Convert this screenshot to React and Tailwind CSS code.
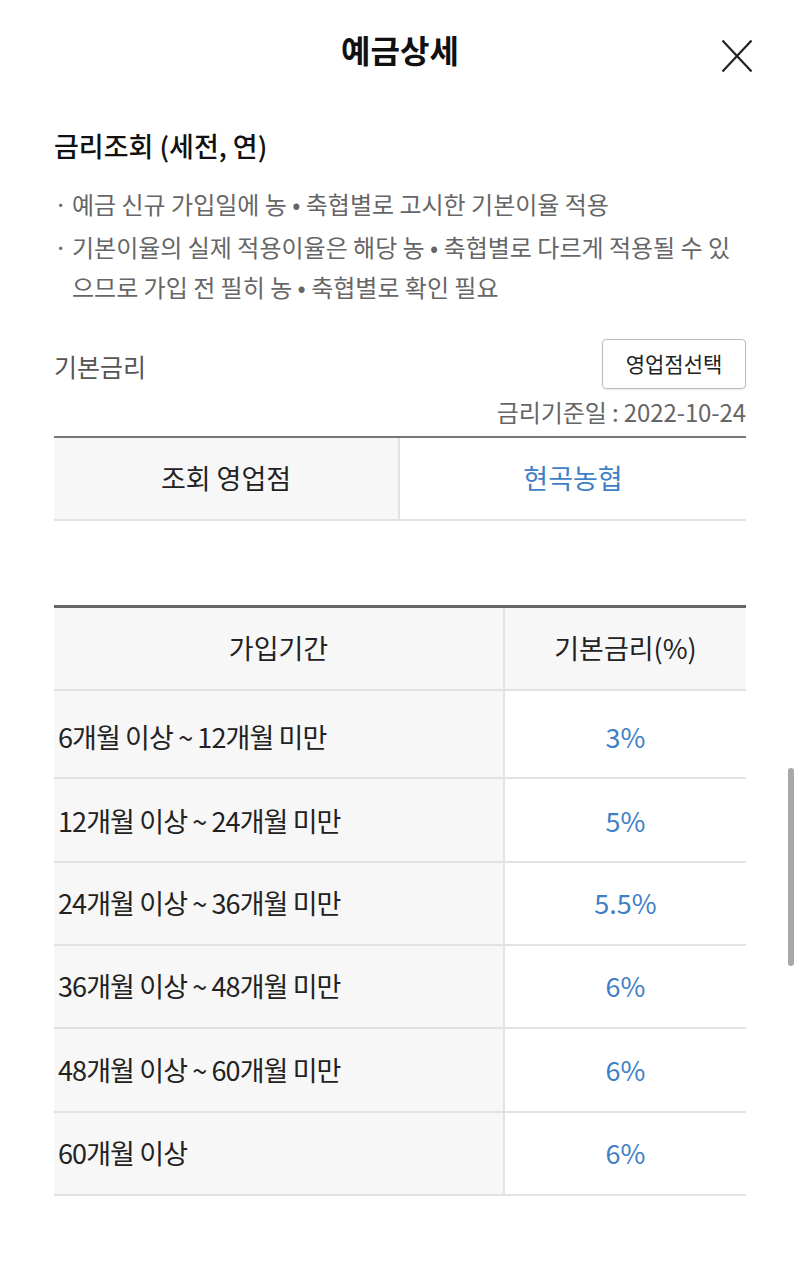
import React from "react";

const rows = [
  ["6개월 이상 ~ 12개월 미만", "3%", "h-[88px]", "translate-y-[3px]"],
  ["12개월 이상 ~ 24개월 미만", "5%", "h-[84px]", "translate-y-[1px]"],
  ["24개월 이상 ~ 36개월 미만", "5.5%", "h-[83px]", ""],
  ["36개월 이상 ~ 48개월 미만", "6%", "h-[83px]", ""],
  ["48개월 이상 ~ 60개월 미만", "6%", "h-[84px]", ""],
  ["60개월 이상", "6%", "h-[83px]", ""],
];

export default function App() {
  return (
    <div
      className="relative w-[800px] h-[1282px] bg-white overflow-hidden text-[#222]"
      style={{ fontFamily: '"Noto Sans CJK KR", "Noto Sans", sans-serif' }}
    >
      <header className="relative h-[100px] flex items-center justify-center">
        <h1 className="text-[32px] leading-[40px] font-bold text-[#111] -mt-[2px]">예금상세</h1>
        <button className="absolute right-[47px] top-[39px] w-[32px] h-[34px]" aria-label="close">
          <svg viewBox="0 0 32 34" className="w-[32px] h-[34px]" fill="none" stroke="#222" strokeWidth="2.2">
            <line x1="1.5" y1="1.5" x2="30.5" y2="32.5" />
            <line x1="30.5" y1="1.5" x2="1.5" y2="32.5" />
          </svg>
        </button>
      </header>

      <main className="px-[54px]">
        <h2 className="mt-[30px] text-[27px] font-medium leading-[36px] text-[#111] -translate-y-[2px]">
          금리조회 (세전, 연)
        </h2>

        <ul className="mt-[20px] text-[24px] leading-[40px] text-[#666]">
          <li className="relative pl-[18px] -translate-y-[2px]">
            <span className="absolute left-0 top-0">·</span>
            예금 신규 가입일에 농 • 축협별로 고시한 기본이율 적용
          </li>
          <li className="relative pl-[18px] mt-[3px] -translate-y-[2px]">
            <span className="absolute left-0 top-0">·</span>
            기본이율의 실제 적용이율은 해당 농 • 축협별로 다르게 적용될 수 있
            <br />
            으므로 가입 전 필히 농 • 축협별로 확인 필요
          </li>
        </ul>

        <div className="mt-[30px] flex items-center justify-between">
          <span className="text-[25px] leading-[34px] text-[#555] translate-y-[2px]">기본금리</span>
          <button className="w-[144px] h-[50px] border border-[#bbb] rounded-[4px] text-[21px] text-[#222] shadow-[0_1px_2px_rgba(0,0,0,0.08)]">
            영업점선택
          </button>
        </div>
        <div className="mt-[8px] text-right text-[24px] leading-[30px] text-[#666] tracking-[-0.1px]">
          금리기준일 : 2022-10-24
        </div>

        <div className="mt-[9px] border-t-2 border-[#777] border-b-2 border-b-[#e2e2e2] flex h-[85px]">
          <div className="w-[346px] bg-[#f7f7f7] border-r-2 border-[#e2e2e2] flex items-center justify-center text-[27px] text-[#222]">
            조회 영업점
          </div>
          <div className="flex-1 flex items-center justify-center text-[27px] text-[#3f7fc7]">
            현곡농협
          </div>
        </div>

        <div className="mt-[84px] border-t-[3px] border-[#666]">
          <div className="flex h-[83px] border-b-2 border-[#e2e2e2] bg-[#f7f7f7]">
            <div className="w-[451px] border-r-2 border-[#e2e2e2] flex items-center justify-center text-[27px] text-[#222]">
              가입기간
            </div>
            <div className="flex-1 flex items-center justify-center text-[27px] text-[#222]">
              기본금리(%)
            </div>
          </div>
          {rows.map(([period, rate, h, shift]) => (
            <div key={period} className={`flex ${h} border-b-2 border-[#e2e2e2]`}>
              <div className="w-[451px] bg-[#f7f7f7] border-r-2 border-[#e2e2e2] flex items-center pl-[4px] text-[27px] tracking-[-0.9px] text-[#222]">
                <span className={shift}>{period}</span>
              </div>
              <div className="flex-1 flex items-center justify-center text-[27px] text-[#3f7fc7]">
                <span className={shift}>{rate}</span>
              </div>
            </div>
          ))}
        </div>
      </main>

      <div className="absolute left-[788px] top-[768px] w-[6px] h-[198px] rounded-full bg-[#a8a8a8]" />
    </div>
  );
}
